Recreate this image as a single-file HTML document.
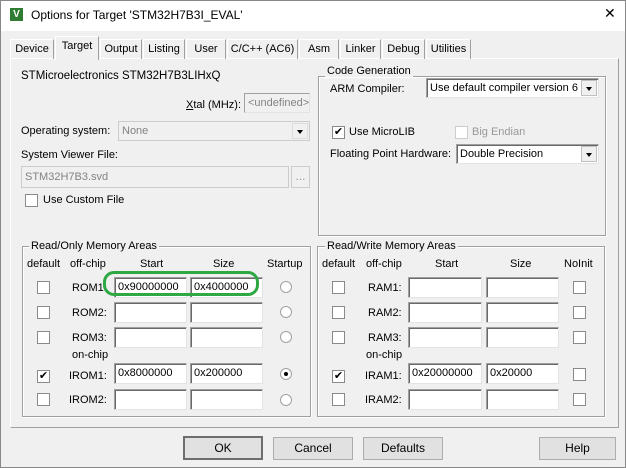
<!DOCTYPE html>
<html><head><meta charset="utf-8"><style>
*{box-sizing:border-box;margin:0;padding:0}
body{width:626px;height:468px;overflow:hidden;background:#f0f0f0;font-family:"Liberation Sans",sans-serif;font-size:11px;color:#000;position:relative}
.a{position:absolute;white-space:nowrap}
.f{position:absolute;background:#fff;border:1px solid;border-color:#a0a0a0 #e3e3e3 #e3e3e3 #a0a0a0;box-shadow:inset 1px 1px 0 #696969;padding:3px 0 0 3px;font-size:11px;white-space:nowrap;overflow:hidden}
.dis{background:#f0f0f0;color:#838383}
.cb{position:absolute;width:13px;height:13px;background:#fff;border:1px solid #8a8a8a;font-size:11px;line-height:11px;text-align:center}
.rd{position:absolute;width:12px;height:12px;border-radius:50%;background:#fff;border:1px solid #a0a0a0}
.g{position:absolute;border:1px solid #a0a0a0;box-shadow:1px 1px 0 #fff,inset 1px 1px 0 #fff}
.gl{position:absolute;background:#f0f0f0;padding:0 2px;white-space:nowrap}
.btn{position:absolute;border:1px solid #adadad;background:#e1e1e1;text-align:center;line-height:21px;font-size:12px}
.tab{position:absolute;top:39px;height:20px;border-top:1px solid #fff;border-left:1px solid #fff;border-right:1px solid #a0a0a0;padding-top:3px;text-align:center;font-size:11px;white-space:nowrap}
.dd{position:absolute;right:1px;top:1px;width:16px;bottom:1px;background:#f0f0f0;border:1px solid #c0c0c0}
.dd:after{content:"";position:absolute;left:4px;top:6px;border:3.5px solid transparent;border-top:4px solid #000}
</style></head><body>
<div class="a" style="left:0;top:0;width:626px;height:31px;background:#fff"></div>
<div class="a" style="left:0;top:0;width:626px;height:468px;border:1px solid #888"></div>
<div class="a" style="left:10px;top:8px;width:13px;height:13px;background:#2e7d32;color:#fff;font-size:10px;font-weight:bold;line-height:13px;text-align:center">V</div>
<div class="a" style="left:31px;top:8px;font-size:12px">Options for Target 'STM32H7B3I_EVAL'</div>
<div class="a" style="left:604px;top:5px;font-size:14px;font-weight:300">✕</div>

<div class="a" style="left:10px;top:58px;width:609px;height:370px;border:1px solid;border-color:#fff #a0a0a0 #a0a0a0 #fff;background:#f0f0f0"></div>
<div class="tab" style="left:10px;width:44px">Device</div>
<div class="tab" style="left:55px;width:44px;top:36px;height:24px;background:#f0f0f0;z-index:2">Target</div>
<div class="tab" style="left:100px;width:42px">Output</div>
<div class="tab" style="left:143px;width:42px">Listing</div>
<div class="tab" style="left:186px;width:40px">User</div>
<div class="tab" style="left:227px;width:71px">C/C++ (AC6)</div>
<div class="tab" style="left:299px;width:40px">Asm</div>
<div class="tab" style="left:340px;width:41px">Linker</div>
<div class="tab" style="left:382px;width:43px">Debug</div>
<div class="tab" style="left:426px;width:45px">Utilities</div>

<div class="a" style="left:21px;top:70px;font-size:11.5px">STMicroelectronics STM32H7B3LIHxQ</div>
<div class="a" style="left:186px;top:99px"><u>X</u>tal (MHz):</div>
<div class="f dis" style="left:244px;top:93px;width:66px;height:20px;box-shadow:none">&lt;undefined&gt;</div>
<div class="a" style="left:21px;top:125px">Operating system:</div>
<div class="f dis" style="left:118px;top:121px;width:192px;height:20px;box-shadow:none;border-color:#ccc">None<div class="dd" style="border-color:#ddd"></div></div>
<div class="a" style="left:21px;top:149px">System Viewer File:</div>
<div class="f dis" style="left:21px;top:166px;width:268px;height:22px;box-shadow:none;border-color:#ccc;padding-top:4px">STM32H7B3.svd</div>
<div class="btn" style="left:291px;top:166px;width:19px;height:22px;line-height:18px;color:#999;background:#f0f0f0;border-color:#ccc">...</div>
<div class="cb" style="left:25px;top:194px"></div>
<div class="a" style="left:43px;top:194px">Use Custom File</div>

<div class="g" style="left:318px;top:76px;width:288px;height:160px"></div>
<div class="gl" style="left:325px;top:65px">Code Generation</div>
<div class="a" style="left:330px;top:83px">ARM Compiler:</div>
<div class="f" style="left:426px;top:78px;width:173px;height:20px">Use default compiler version 6<div class="dd"></div></div>
<div class="cb" style="left:332px;top:126px">✔</div>
<div class="a" style="left:349px;top:126px">Use MicroLIB</div>
<div class="cb" style="left:455px;top:126px;border-color:#ccc"></div>
<div class="a" style="left:472px;top:126px;color:#999">Big Endian</div>
<div class="a" style="left:330px;top:148px">Floating Point Hardware:</div>
<div class="f" style="left:456px;top:144px;width:143px;height:20px">Double Precision<div class="dd"></div></div>

<div class="g" style="left:22px;top:246px;width:289px;height:171px"></div>
<div class="gl" style="left:29px;top:240px">Read/Only Memory Areas</div>
<div class="a" style="left:27px;top:258px">default</div>
<div class="a" style="left:70px;top:258px">off-chip</div>
<div class="a" style="left:140px;top:258px">Start</div>
<div class="a" style="left:213px;top:258px">Size</div>
<div class="a" style="left:267px;top:258px">Startup</div>

<div class="g" style="left:317px;top:246px;width:288px;height:171px"></div>
<div class="gl" style="left:325px;top:240px">Read/Write Memory Areas</div>
<div class="a" style="left:322px;top:258px">default</div>
<div class="a" style="left:366px;top:258px">off-chip</div>
<div class="a" style="left:435px;top:258px">Start</div>
<div class="a" style="left:510px;top:258px">Size</div>
<div class="a" style="left:564px;top:258px">NoInit</div>

<div class="a" style="left:72px;top:349px">on-chip</div>
<div class="a" style="left:366px;top:349px">on-chip</div>

<div class="cb" style="left:37px;top:281px"></div><div class="a" style="left:72px;top:282px">ROM1:</div>
<div class="f" style="left:114px;top:277px;width:73px;height:21px">0x90000000</div><div class="f" style="left:190px;top:277px;width:73px;height:21px">0x4000000</div><div class="rd" style="left:280px;top:281px"></div>
<div class="cb" style="left:37px;top:306px"></div><div class="a" style="left:72px;top:307px">ROM2:</div>
<div class="f" style="left:114px;top:302px;width:73px;height:21px"></div><div class="f" style="left:190px;top:302px;width:73px;height:21px"></div><div class="rd" style="left:280px;top:306px"></div>
<div class="cb" style="left:37px;top:331px"></div><div class="a" style="left:72px;top:332px">ROM3:</div>
<div class="f" style="left:114px;top:327px;width:73px;height:21px"></div><div class="f" style="left:190px;top:327px;width:73px;height:21px"></div><div class="rd" style="left:280px;top:331px"></div>
<div class="cb" style="left:37px;top:370px">✔</div><div class="a" style="left:69px;top:370px">IROM1:</div>
<div class="f" style="left:114px;top:363px;width:73px;height:21px">0x8000000</div><div class="f" style="left:190px;top:363px;width:73px;height:21px">0x200000</div><div class="rd" style="left:280px;top:368px"><div class="a" style="left:3px;top:3px;width:4px;height:4px;border-radius:50%;background:#000"></div></div>
<div class="cb" style="left:37px;top:393px"></div><div class="a" style="left:69px;top:394px">IROM2:</div>
<div class="f" style="left:114px;top:389px;width:73px;height:21px"></div><div class="f" style="left:190px;top:389px;width:73px;height:21px"></div><div class="rd" style="left:280px;top:394px"></div>

<div class="cb" style="left:332px;top:281px"></div><div class="a" style="left:368px;top:282px">RAM1:</div>
<div class="f" style="left:408px;top:277px;width:74px;height:21px"></div><div class="f" style="left:486px;top:277px;width:73px;height:21px"></div><div class="cb" style="left:573px;top:281px"></div>
<div class="cb" style="left:332px;top:306px"></div><div class="a" style="left:368px;top:307px">RAM2:</div>
<div class="f" style="left:408px;top:302px;width:74px;height:21px"></div><div class="f" style="left:486px;top:302px;width:73px;height:21px"></div><div class="cb" style="left:573px;top:306px"></div>
<div class="cb" style="left:332px;top:331px"></div><div class="a" style="left:368px;top:332px">RAM3:</div>
<div class="f" style="left:408px;top:327px;width:74px;height:21px"></div><div class="f" style="left:486px;top:327px;width:73px;height:21px"></div><div class="cb" style="left:573px;top:331px"></div>
<div class="cb" style="left:332px;top:370px">✔</div><div class="a" style="left:365px;top:370px">IRAM1:</div>
<div class="f" style="left:408px;top:363px;width:74px;height:21px">0x20000000</div><div class="f" style="left:486px;top:363px;width:73px;height:21px">0x20000</div><div class="cb" style="left:573px;top:368px"></div>
<div class="cb" style="left:332px;top:393px"></div><div class="a" style="left:365px;top:394px">IRAM2:</div>
<div class="f" style="left:408px;top:389px;width:74px;height:21px"></div><div class="f" style="left:486px;top:389px;width:73px;height:21px"></div><div class="cb" style="left:573px;top:393px"></div>

<div class="a" style="left:103px;top:271px;width:156px;height:25px;border:3px solid #2ea843;border-radius:11px"></div>

<div class="btn" style="left:183px;top:436px;width:80px;height:24px;border:2px solid #6d6d6d">OK</div>
<div class="btn" style="left:273px;top:437px;width:80px;height:23px">Cancel</div>
<div class="btn" style="left:363px;top:437px;width:80px;height:23px">Defaults</div>
<div class="btn" style="left:539px;top:437px;width:77px;height:23px">Help</div>
</body></html>
